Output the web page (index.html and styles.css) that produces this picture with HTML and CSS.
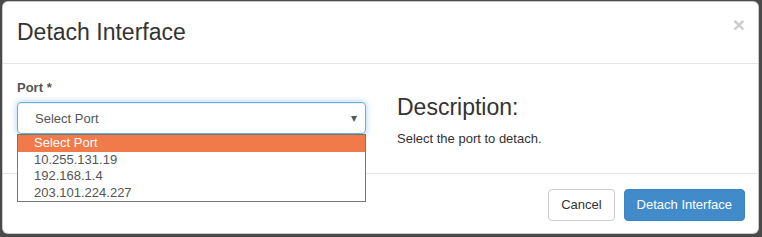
FILE: index.html
```html
<!DOCTYPE html>
<html lang="en">
<head>
  <meta charset="UTF-8">
  <meta name="viewport" content="width=device-width, initial-scale=1.0">
  <title>Detach Interface</title>
  <link rel="stylesheet" href="styles.css">
</head>
<body>

  <div class="modal">
    <div class="modal-header">
      <h3 class="modal-title">Detach Interface</h3>
      <span class="close">&times;</span>
    </div>

    <div class="modal-body">
      <div class="col-left">
        <div class="form-group">
          <label>Port <span class="req">*</span></label>
          <div class="select-wrap">
            <div class="select">
              <span>Select Port</span>
              <span class="caret">&#9662;</span>
            </div>
            <ul class="options">
              <li class="active">Select Port</li>
              <li>10.255.131.19</li>
              <li>192.168.1.4</li>
              <li>203.101.224.227</li>
            </ul>
          </div>
        </div>
      </div>

      <div class="col-right">
        <h3>Description:</h3>
        <p>Select the port to detach.</p>
      </div>
    </div>

    <div class="modal-footer">
      <button class="btn">Cancel</button>
      <button class="btn btn-primary">Detach Interface</button>
    </div>
  </div>

</body>
</html>
```

FILE: styles.css
```css
body {
  margin: 0;
  padding: 1px 3px 0 2px;
  background: #4a4a4a;
  font-family: "Liberation Sans", Arial, sans-serif;
  font-size: 13px;
  color: #333;
}

.modal {
  background: #fff;
  border: 1px solid rgba(0,0,0,0.2);
  border-radius: 6px;
  height: 233px;
  box-sizing: border-box;
}

.modal-header {
  display: flex;
  justify-content: space-between;
  align-items: flex-start;
  padding: 16px 13px 17px 14px;
  border-bottom: 1px solid #e5e5e5;
}

.modal-title {
  margin: 0;
  font-size: 23px;
  font-weight: normal;
  line-height: 28px;
  color: #333;
}

.close {
  font-size: 21px;
  font-weight: bold;
  line-height: 1;
  color: #000;
  opacity: 0.2;
  margin-top: -4px;
}

.modal-body {
  display: grid;
  grid-template-columns: 349px 1fr;
  column-gap: 31px;
  padding: 15px 14px 24px 14px;
  border-bottom: 1px solid #e5e5e5;
}

.form-group {
  margin-bottom: 15px;
}

label {
  display: block;
  font-weight: bold;
  color: #555;
  line-height: 18px;
  margin-bottom: 5px;
}

.select-wrap {
  position: relative;
}

.select {
  display: flex;
  justify-content: space-between;
  align-items: center;
  height: 32px;
  box-sizing: border-box;
  padding: 0 8px 0 17px;
  border: 1px solid #66afe9;
  border-radius: 4px;
  box-shadow: inset 0 1px 1px rgba(0,0,0,0.075), 0 0 6px rgba(102,175,233,0.6);
  color: #555;
}

.caret {
  font-size: 12px;
  color: #555;
}

.options {
  position: absolute;
  top: 32px;
  left: 0;
  right: 0;
  margin: 0;
  padding: 0;
  list-style: none;
  background: #fff;
  border: 1px solid #767676;
  z-index: 2;
}

.options li {
  height: 16.6px;
  line-height: 16.6px;
  padding-left: 16px;
  color: #555;
}

.options li.active {
  background: #f07a4a;
  color: #fff;
}

.col-right h3 {
  margin: 16px 0 10px 0;
  font-size: 23px;
  font-weight: normal;
  line-height: 25px;
  color: #333;
}

.col-right p {
  margin: 0;
  line-height: 18px;
}

.modal-footer {
  display: flex;
  justify-content: flex-end;
  gap: 9px;
  padding: 15px 13px;
}

.btn {
  font-family: inherit;
  font-size: 13px;
  line-height: 18px;
  padding: 6px 12px;
  border: 1px solid #ccc;
  border-radius: 4px;
  background: #fff;
  color: #333;
}

.btn-primary {
  background: #428bca;
  border-color: #3d84c2;
  color: #fff;
}
```
